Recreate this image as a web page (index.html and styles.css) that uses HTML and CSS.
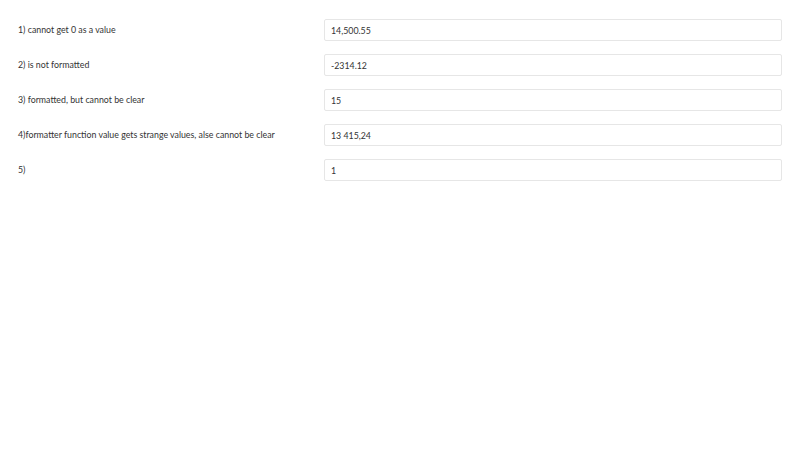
FILE: index.html
```html
<!DOCTYPE html>
<html lang="en">
<head>
    <meta charset="UTF-8">
    <meta name="viewport" content="width=device-width, initial-scale=1.0">
    <title>Number inputs</title>
    <link rel="stylesheet" href="styles.css">
</head>
<body>
    <div class="form">
        <div class="form-row">
            <label class="form-label">1) cannot get 0 as a value</label>
            <input class="form-input" type="text" value="14,500.55">
        </div>
        <div class="form-row">
            <label class="form-label">2) is not formatted</label>
            <input class="form-input" type="text" value="-2314.12">
        </div>
        <div class="form-row">
            <label class="form-label">3) formatted, but cannot be clear</label>
            <input class="form-input" type="text" value="15">
        </div>
        <div class="form-row">
            <label class="form-label">4)formatter function value gets strange values, alse cannot be clear</label>
            <input class="form-input" type="text" value="13 415,24">
        </div>
        <div class="form-row">
            <label class="form-label">5)</label>
            <input class="form-input" type="text" value="1">
        </div>
    </div>
</body>
</html>
```

FILE: styles.css
```css
body {
    margin: 0;
    font-family: Lato, sans-serif;
    font-size: 8.8px;
    color: #333;
    background-color: #fff;
}

.form {
    padding: 19px 18px;
    display: flex;
    flex-direction: column;
    gap: 13px;
}

.form-row {
    display: grid;
    grid-template-columns: 306px 1fr;
    align-items: center;
}

.form-label {
    line-height: 22px;
}

.form-input {
    box-sizing: border-box;
    height: 22px;
    width: 100%;
    padding: 0 6px;
    border: 1px solid #e6e6e6;
    border-radius: 2px;
    font-family: inherit;
    font-size: 8.8px;
    color: #333;
    outline: none;
}
```
